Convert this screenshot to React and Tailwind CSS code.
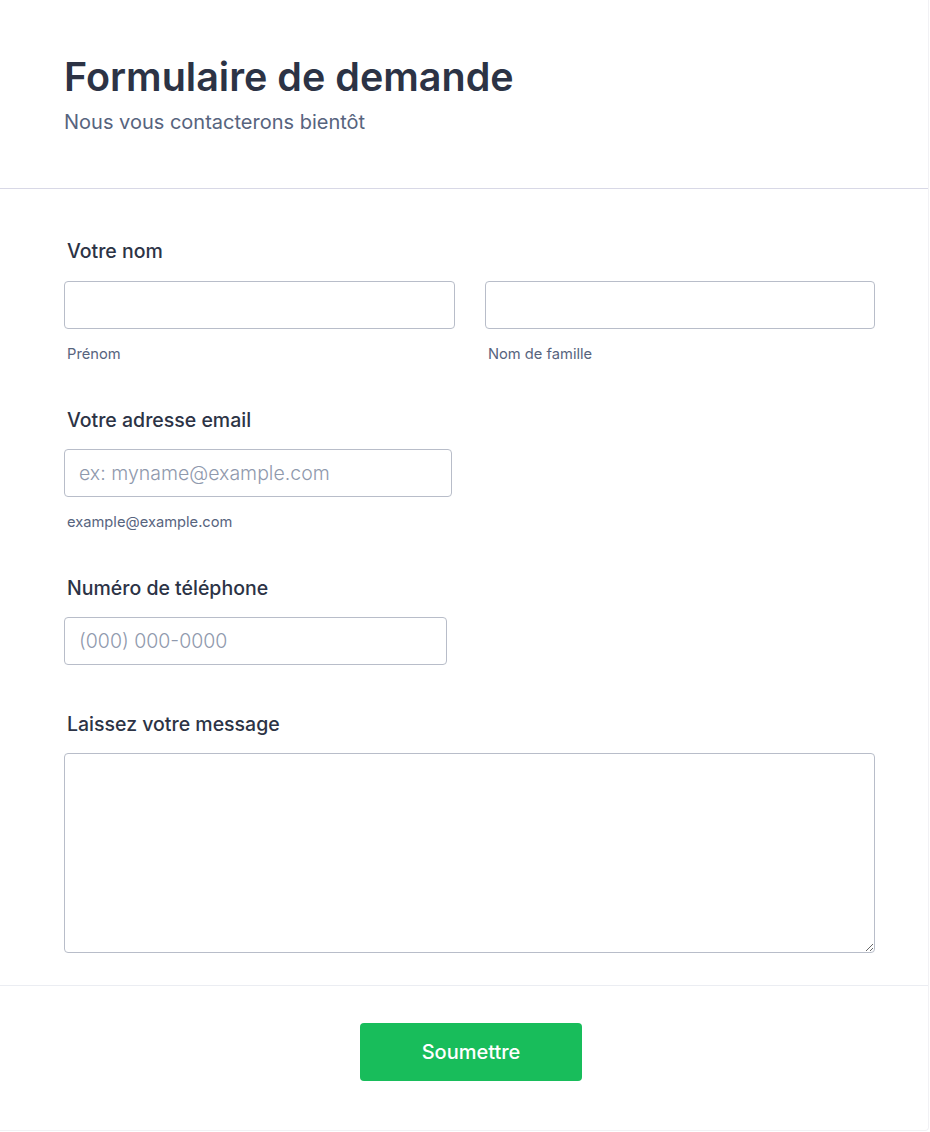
import React from "react";

function Label({ children, className = "" }) {
  return (
    <label className={"block pl-[3px] text-[19.5px] leading-[22px] font-medium text-[#2c3345] " + className}>
      {children}
    </label>
  );
}

function Sub({ children }) {
  return <p className="mt-[16px] pl-[3px] text-[14.7px] leading-[18px] text-[#57647e]">{children}</p>;
}

const inputCls =
  "block h-[48px] rounded-[4px] border border-[#b8bdc9] bg-white px-[14px] text-[19.5px] font-light text-[#2c3345] outline-none placeholder:text-[#8f99ad]";

export default function App() {
  return (
    <div className="min-h-[1132px] bg-white" style={{ fontFamily: "Inter, 'Noto Sans', sans-serif" }}>
      <div className="w-[929px] border-r border-b border-[#f1f1f4] rounded-br-[4px] bg-white">
        <div className="px-[64px] pt-[55px] pb-[54px] border-b border-[#d8d8e6]">
          <h1 className="text-[39.5px] leading-[44px] font-semibold text-[#2c3345]">Formulaire de demande</h1>
          <p className="mt-[11px] text-[20px] leading-[24px] text-[#57647e]">Nous vous contacterons bientôt</p>
        </div>

        <form className="pl-[64px] pr-[53px] pt-[51px] pb-[32px]" onSubmit={(e) => e.preventDefault()}>
          <Label>Votre nom</Label>
          <div className="mt-[19px] flex gap-[30px]">
            <div className="w-[391px] shrink-0">
              <input className={inputCls + " w-full"} />
              <Sub>Prénom</Sub>
            </div>
            <div className="w-[390px] shrink-0">
              <input className={inputCls + " w-full"} />
              <Sub>Nom de famille</Sub>
            </div>
          </div>

          <Label className="mt-[46px]">Votre adresse email</Label>
          <input className={inputCls + " mt-[18px] w-[388px]"} placeholder="ex: myname@example.com" />
          <Sub>example@example.com</Sub>

          <Label className="mt-[46px]">Numéro de téléphone</Label>
          <input className={inputCls + " mt-[18px] w-[383px]"} placeholder="(000) 000-0000" />

          <Label className="mt-[48px]">Laissez votre message</Label>
          <textarea className="mt-[18px] block h-[200px] w-[811px] rounded-[4px] border border-[#b8bdc9] bg-white p-[14px] text-[18px] outline-none" />
        </form>

        <div className="border-t border-[#ebedf2] pt-[37px] pb-[49px] pl-[14px] flex justify-center">
          <button
            type="submit"
            className="h-[58px] w-[222px] rounded-[4px] bg-[#18bd5b] text-[20px] font-medium text-white"
          >
            Soumettre
          </button>
        </div>
      </div>
    </div>
  );
}
